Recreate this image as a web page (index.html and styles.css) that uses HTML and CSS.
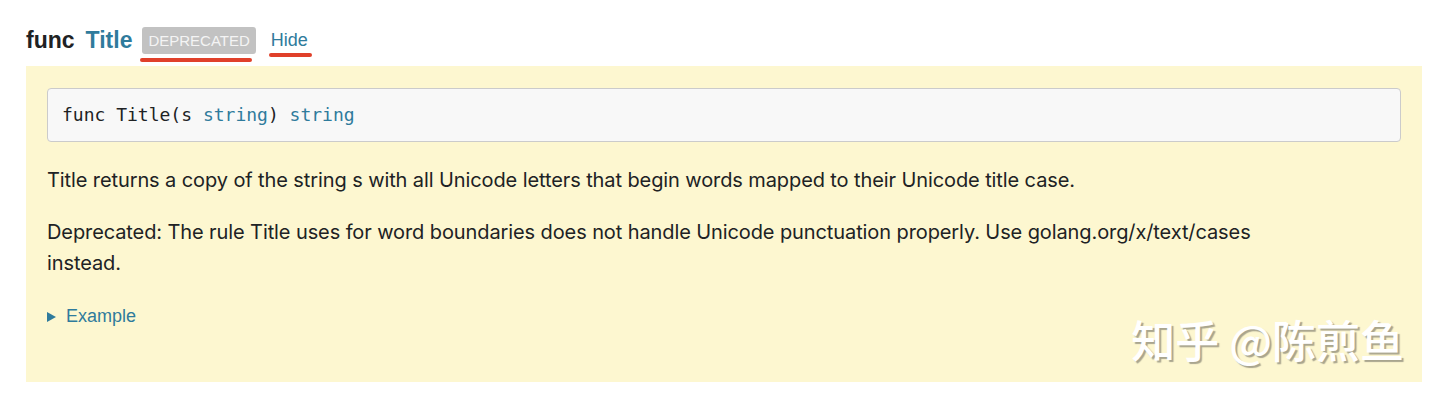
FILE: index.html
```html
<!DOCTYPE html>
<html>
<head>
<meta charset="utf-8">
<link rel="stylesheet" href="styles.css">
</head>
<body>
<div class="page">
  <h2 class="hdr">
    <span class="kw">func</span>
    <a class="name">Title</a>
    <span class="badge mark">DEPRECATED</span>
    <a class="hide mark">Hide</a>
  </h2>
  <div class="doc">
    <pre class="code">func Title(s <span class="ty">string</span>) <span class="ty">string</span></pre>
    <p class="txt">Title returns a copy of the string s with all Unicode letters that begin words mapped to their Unicode title case.</p>
    <p class="txt">Deprecated: The rule Title uses for word boundaries does not handle Unicode punctuation properly. Use golang.org/x/text/cases instead.</p>
    <div class="example"><span class="tri"></span>Example</div>
    <div class="wm">知乎 @陈煎鱼</div>
  </div>
</div>
</body>
</html>
```
FILE: styles.css
```css
html, body { margin: 0; padding: 0; background: #fff; }
body { font-family: "Liberation Sans", Arial, sans-serif; color: #202224; }
.page { padding: 0 18px 0 26px; }
.hdr {
  margin: 24px 0 10px;
  height: 32px;
  display: flex;
  align-items: center;
  font-size: 23px;
  font-weight: bold;
}
.kw { color: #202224; }
.name { color: #2f7b9c; margin-left: 11px; }
.badge {
  margin-left: 10px;
  background: #c2c2c2;
  color: #f4f4f4;
  font-size: 15px;
  font-weight: normal;
  padding: 0 6px;
  height: 27px;
  line-height: 27px;
  border-radius: 3px;
  position: relative;
}
.hide {
  margin-left: 15px;
  color: #2f7b9c;
  font-size: 18px;
  font-weight: normal;
  position: relative;
}
.mark::after {
  content: "";
  position: absolute;
  height: 4px;
  border-radius: 2px;
  background: #e0402a;
}
.badge::after { left: -2px; right: 4px; bottom: -8px; }
.hide::after { left: -2px; right: -4px; bottom: -6px; }
.doc {
  position: relative;
  background: #fdf7d0;
  height: 316px;
  box-sizing: border-box;
  padding: 22px 21px 0 21px;
}
.code {
  margin: 0;
  height: 54px;
  box-sizing: border-box;
  background: #f8f8f8;
  border: 1px solid #cbcbcb;
  border-radius: 4px;
  padding: 0 14px;
  line-height: 52px;
  font-family: "DejaVu Sans Mono", monospace;
  font-size: 18px;
  color: #202224;
}
.ty { color: #2f7b9c; }
.txt {
  margin: 23px 0 0;
  max-width: 1230px;
  font-family: Inter, "Liberation Sans", sans-serif;
  font-size: 20px;
  line-height: 31px;
  letter-spacing: -0.1px;
}
.txt + .txt { margin-top: 21px; }
.example {
  margin-top: 27px;
  display: flex;
  align-items: center;
  color: #2f7b9c;
  font-size: 18px;
}
.tri {
  width: 0; height: 0;
  border-left: 9px solid #2f7b9c;
  border-top: 5px solid transparent;
  border-bottom: 5px solid transparent;
  margin-right: 10px;
}
.wm {
  position: absolute;
  right: 18px;
  bottom: 19px;
  font-family: "Noto Sans CJK SC", sans-serif;
  font-size: 44px;
  font-weight: 500;
  line-height: 48px;
  color: #fff;
  text-shadow: 2px 2px 1px #a9a58e;
}
```
